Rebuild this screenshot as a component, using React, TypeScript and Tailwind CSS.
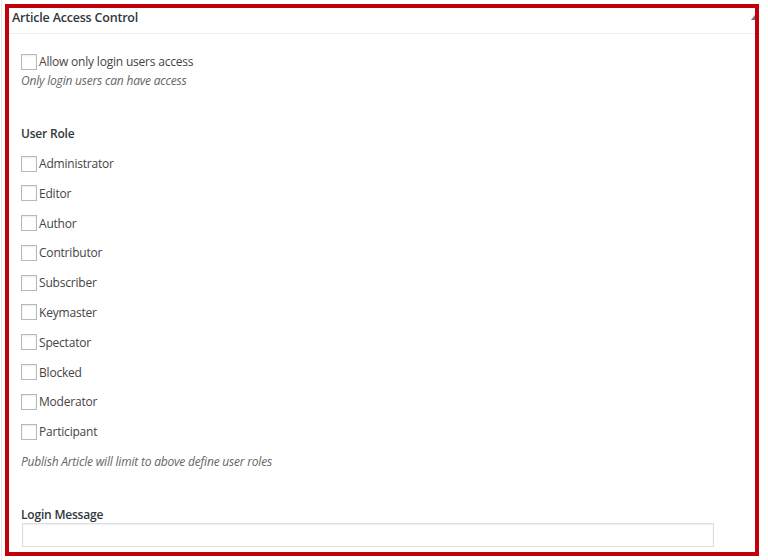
import React from 'react'

const roles = [
  'Administrator',
  'Editor',
  'Author',
  'Contributor',
  'Subscriber',
  'Keymaster',
  'Spectator',
  'Blocked',
  'Moderator',
  'Participant',
]

function Checkbox() {
  return (
    <span className="w-4 h-4 shrink-0 border border-[#b4b9be] bg-white shadow-[inset_0_1px_2px_rgba(0,0,0,0.08)]" />
  )
}

export default function App() {
  return (
    <div
      className="w-[768px] h-[560px] bg-white text-[#444] overflow-hidden"
      style={{ fontFamily: '"Open Sans", "Noto Sans", sans-serif' }}
    >
      <div className="ml-[1px] h-full border-l border-[#e5e5e5] pl-[3px] pt-[4px]">
        <div className="w-[754px] h-[552px] border-4 border-[#c1000b] overflow-hidden">
          {/* Header */}
          <div className="h-[26px] border-b border-[#eee] flex items-start justify-between pl-[3px] pt-[1px]">
            <span className="text-[12.5px] tracking-[-0.2px] leading-[18px] font-semibold text-[#32373c]">
              Article Access Control
            </span>
            <svg width="8" height="5" viewBox="0 0 8 5" className="mt-[6px] -mr-[4px]">
              <polygon points="0,5 4,0 8,5" fill="#72777c" />
            </svg>
          </div>

          <div className="px-[12px] pt-[1px] text-[12px] tracking-[-0.2px]">
            {/* Login only */}
            <label className="mt-[17px] h-[20px] flex items-center gap-[2px]">
              <span className="-mt-[1px] flex"><Checkbox /></span>
              <span className="leading-[20px]">Allow only login users access</span>
            </label>
            <p className="italic text-[#666] leading-[18px]">Only login users can have access</p>

            {/* User Role */}
            <h4 className="mt-[34px] leading-[20px] font-semibold text-[#32373c]">User Role</h4>
            <div className="mt-[10px] flex flex-col gap-[9.8px]">
              {roles.map(r => (
                <label key={r} className="h-[20px] flex items-center gap-[2px]">
                  <span className="-mt-[1px] flex"><Checkbox /></span>
                  <span className="leading-[20px]">{r}</span>
                </label>
              ))}
            </div>
            <p className="mt-[10px] italic text-[#666] leading-[20px]">
              Publish Article will limit to above define user roles
            </p>

            {/* Login Message */}
            <h4 className="mt-[34px] leading-[17px] font-semibold text-[#32373c]">Login Message</h4>
            <input
              type="text"
              className="ml-[1px] w-[692px] h-[24px] border border-[#ddd] bg-white shadow-[inset_0_1px_2px_rgba(0,0,0,0.07)] outline-none"
            />
          </div>
        </div>
      </div>
    </div>
  )
}
